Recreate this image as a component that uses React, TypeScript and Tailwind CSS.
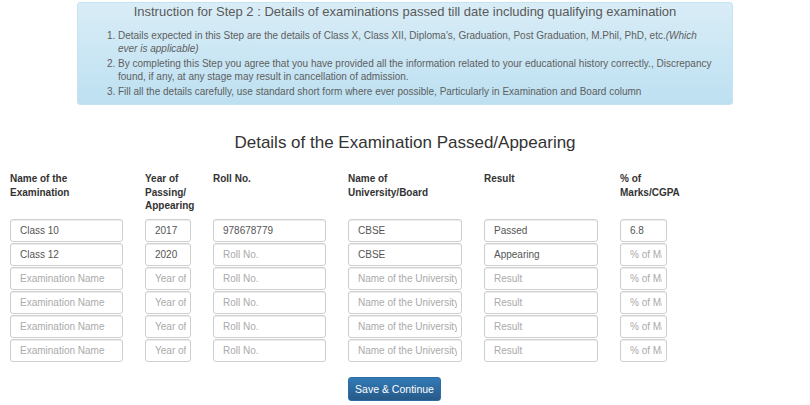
const font = { fontFamily: '"Liberation Sans", Arial, sans-serif' };

type Row = {
  exam: string;
  year: string;
  roll: string;
  board: string;
  result: string;
  marks: string;
};

const rows: Row[] = [
  { exam: "Class 10", year: "2017", roll: "978678779", board: "CBSE", result: "Passed", marks: "6.8" },
  { exam: "Class 12", year: "2020", roll: "", board: "CBSE", result: "Appearing", marks: "" },
  { exam: "", year: "", roll: "", board: "", result: "", marks: "" },
  { exam: "", year: "", roll: "", board: "", result: "", marks: "" },
  { exam: "", year: "", roll: "", board: "", result: "", marks: "" },
  { exam: "", year: "", roll: "", board: "", result: "", marks: "" },
];

const inputCls =
  "h-[23px] w-full rounded-[3px] border border-[#cfcfcf] bg-white pl-[9px] pr-1 text-[10px] text-[#555] shadow-[inset_0_1px_1px_rgba(0,0,0,0.075)] outline-none placeholder:text-[#aaa]";

function Field({ value, placeholder }: { value: string; placeholder: string }) {
  return <input className={inputCls} defaultValue={value} placeholder={placeholder} />;
}

export default function App() {
  return (
    <div className="h-[405px] w-[810px] overflow-hidden bg-white" style={font}>
      <div className="mx-auto mt-[2px] h-[103px] w-[656px] rounded-[3px] border border-[#c6e3f2] bg-gradient-to-b from-[#d9edf7] to-[#bde0f1] px-[20px] pt-[1px] text-[#555]">
        <h3 className="text-center text-[13px] leading-[16px] text-[#5a5a5a]">
          Instruction for Step 2 : Details of examinations passed till date including qualifying examination
        </h3>
        <ol className="mt-[9px] list-decimal pl-[20px] text-[10px] leading-[13px] text-[#5e5e5e]">
          <li className="mb-[2px]">
            Details expected in this Step are the details of Class X, Class XII, Diploma's, Graduation, Post
            Graduation, M.Phil, PhD, etc.<i>(Which</i>
            <br />
            <i>ever is applicable)</i>
          </li>
          <li className="mb-[2px]">
            By completing this Step you agree that you have provided all the information related to your
            educational history correctly., Discrepancy found, if any, at any stage may result in cancellation of
            admission.
          </li>
          <li>
            Fill all the details carefully, use standard short form where ever possible, Particularly in
            Examination and Board column
          </li>
        </ol>
      </div>

      <h2 className="mt-[27px] text-center text-[17px] leading-[22px] text-[#333]">
        Details of the Examination Passed/Appearing
      </h2>

      <div className="mt-[18px] grid grid-cols-[113px_46px_113px_114px_114px_47px] gap-x-[22px] pl-[10px] text-[10px] font-bold leading-[13.5px] text-[#333]">
        <div>
          Name of the
          <br />
          Examination
        </div>
        <div className="whitespace-nowrap">
          Year of
          <br />
          Passing/
          <br />
          Appearing
        </div>
        <div>Roll No.</div>
        <div>
          Name of
          <br />
          University/Board
        </div>
        <div>Result</div>
        <div className="whitespace-nowrap">
          % of
          <br />
          Marks/CGPA
        </div>
      </div>

      <div className="mt-[6px] flex flex-col gap-[1px] pl-[10px]">
        {rows.map((r, i) => (
          <div key={i} className="grid grid-cols-[113px_46px_113px_114px_114px_47px] gap-x-[22px]">
            <Field value={r.exam} placeholder="Examination Name" />
            <Field value={r.year} placeholder="Year of Passing" />
            <Field value={r.roll} placeholder="Roll No." />
            <Field value={r.board} placeholder="Name of the University/Board" />
            <Field value={r.result} placeholder="Result" />
            <Field value={r.marks} placeholder="% of Marks" />
          </div>
        ))}
      </div>

      <div className="mt-[14px] pl-[348px]">
        <button className="h-[24px] w-[93px] rounded-[3px] border border-[#2e6da4] bg-gradient-to-b from-[#337ab7] to-[#265a88] text-[10.5px] text-white">
          Save &amp; Continue
        </button>
      </div>
    </div>
  );
}
